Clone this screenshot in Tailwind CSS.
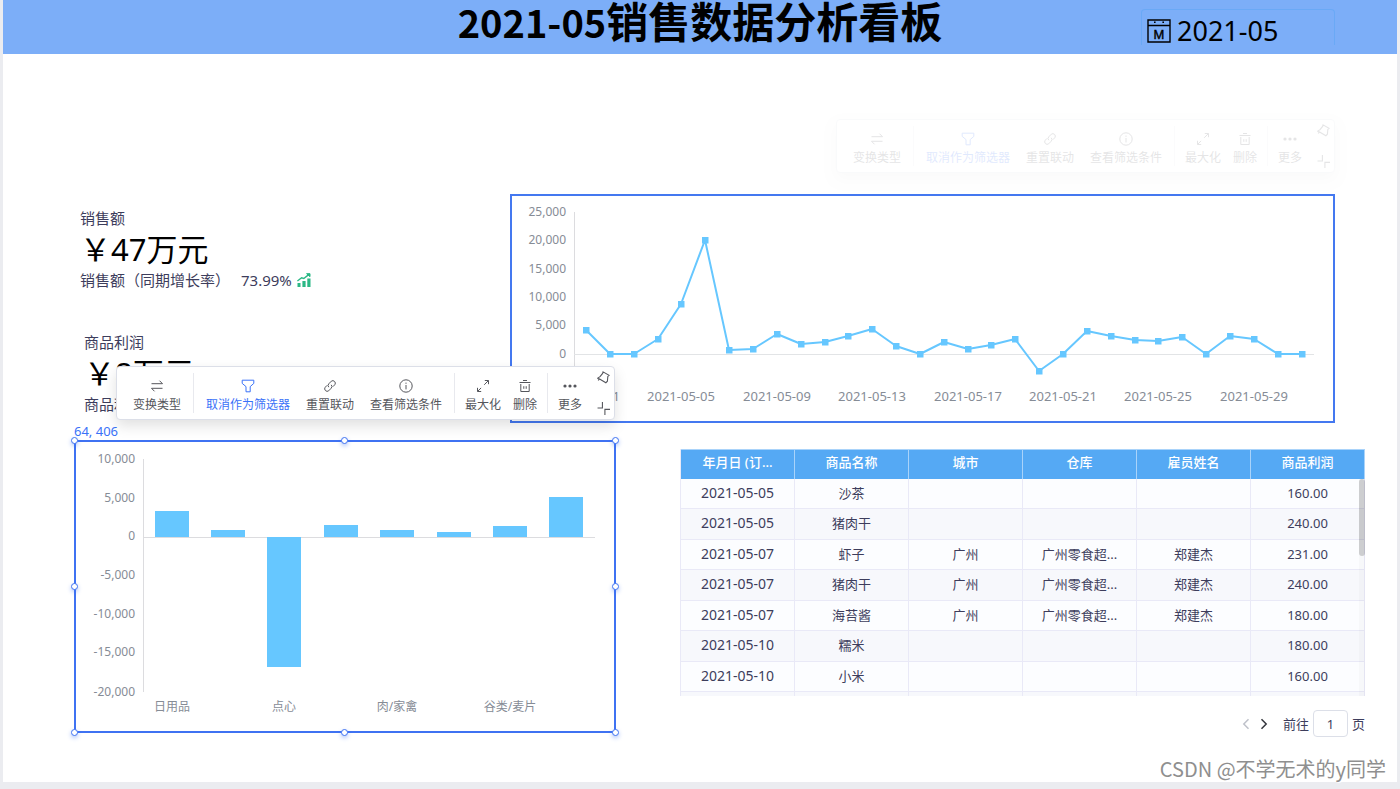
<!DOCTYPE html>
<html lang="zh-CN">

<head>
    <meta charset="UTF-8">
    <meta name="viewport" content="width=device-width, initial-scale=1.0">
    <title>销售数据分析看板</title>
    <script src="https://cdn.jsdelivr.net/npm/@tailwindcss/browser@4"></script>
</head>

<body class="min-h-screen flex flex-col bg-[#ebecf0] px-[3px] pb-[7px] font-['Noto_Sans','Noto_Sans_CJK_SC',sans-serif] text-[#3d3d5c]">

    <!-- Icon set -->
    <svg class="hidden" aria-hidden="true">
        <symbol id="i-swap" viewBox="0 0 14 14"><path d="M1.5 4.7h11l-3-3M12.5 9.3h-11l3 3" /></symbol>
        <symbol id="i-filter" viewBox="0 0 14 14"><path d="M1.2 1.2h11.6v3.2L9.2 7.6v5.2H5V7.6L1.2 4.4z" /></symbol>
        <symbol id="i-link" viewBox="0 0 14 14"><path d="M5.8 8.2a2.4 2.4 0 0 1 0-3.4l2.5-2.6a2.5 2.5 0 0 1 3.5 3.5L10 7.6M8.2 5.8a2.4 2.4 0 0 1 0 3.4l-2.5 2.6a2.5 2.5 0 0 1-3.5-3.5L4 6.4" /></symbol>
        <symbol id="i-info" viewBox="0 0 14 14"><circle cx="7" cy="7" r="6.2" /><path d="M7 6v4.4M7 3.6v1.2" /></symbol>
        <symbol id="i-max" viewBox="0 0 14 14"><path d="M8.8 1.5h3.7v3.7M12.3 1.7 8.2 5.8M5.2 12.5H1.5V8.8M1.7 12.3l3.4-3.4" /></symbol>
        <symbol id="i-trash" viewBox="0 0 14 14"><path d="M1.5 3.5h11M5 1.5h4M2.8 5v7.5h8.4V5M5.8 7.2v2.6M8.2 7.2v2.6" /></symbol>
        <symbol id="i-more" viewBox="0 0 14 14"><g fill="currentColor" stroke="none"><circle cx="2" cy="7" r="1.6" /><circle cx="7" cy="7" r="1.6" /><circle cx="12" cy="7" r="1.6" /></g></symbol>
        <symbol id="i-pin" viewBox="0 0 12 12"><path d="M5.6.8l5.6 3.2-1.2 1-.4 4.4-1.4 1.4L2.4 7.4.6 6.6l2.2-1.4 2.4-3zM2.4 7.4 1 8.6" /></symbol>
        <symbol id="i-fold" viewBox="0 0 12 12"><path d="M.5 5.5H5V0M12 6.8H7.3V12" /></symbol>
        <symbol id="i-growth" viewBox="0 0 14 14">
            <path fill="currentColor" stroke="none" d="M.5 10h3v4h-3zM5.4 8h3.2v6H5.4zM10.3 5.4h3.2V14h-3.2z" />
            <path stroke-width="1.4" d="M.4 8 4.6 4.8l2.2.7L12 1.4" /><path fill="currentColor" d="M9.6.7H13v3z" />
        </symbol>
    </svg>

    <!-- Widget toolbar, cloned above each selected chart -->
    <template id="toolbar">
        <div class="flex h-[54px] items-center rounded border border-[#dcdfe8] bg-white text-xs leading-4 text-[#55565c] shadow-[0_6px_14px_rgba(0,0,0,0.12)] whitespace-nowrap">
            <div class="pt-[6px] pl-4 pr-3">
                <button class="flex flex-col items-center gap-1"><svg class="size-[14px] fill-none stroke-current"><use href="#i-swap" /></svg>变换类型</button>
            </div>
            <div class="flex gap-4 border-l border-[#e8e9ee] px-3 pt-[6px]">
                <button class="flex flex-col items-center gap-1 text-[#3a72f8]"><svg class="size-[14px] fill-none stroke-current"><use href="#i-filter" /></svg>取消作为筛选器</button>
                <button class="flex flex-col items-center gap-1"><svg class="size-[14px] fill-none stroke-current"><use href="#i-link" /></svg>重置联动</button>
                <button class="flex flex-col items-center gap-1"><svg class="size-[14px] fill-none stroke-current"><use href="#i-info" /></svg>查看筛选条件</button>
            </div>
            <div class="flex gap-3 border-l border-[#e8e9ee] px-[10px] pt-[6px]">
                <button class="flex flex-col items-center gap-1"><svg class="size-[14px] fill-none stroke-current"><use href="#i-max" /></svg>最大化</button>
                <button class="flex flex-col items-center gap-1"><svg class="size-[14px] fill-none stroke-current"><use href="#i-trash" /></svg>删除</button>
            </div>
            <div class="border-l border-[#e8e9ee] px-[10px] pt-[6px]">
                <button class="flex flex-col items-center gap-1"><svg class="size-[14px] fill-none stroke-current"><use href="#i-more" /></svg>更多</button>
            </div>
            <div class="flex h-full flex-col justify-between py-1 pl-[5px] pr-1">
                <button aria-label="固定"><svg class="size-[13px] fill-none stroke-current"><use href="#i-pin" /></svg></button>
                <button aria-label="收起"><svg class="size-[13px] fill-none stroke-current"><use href="#i-fold" /></svg></button>
            </div>
        </div>
    </template>

    <!-- Header -->
    <header class="grid h-[54px] grid-cols-[1fr_auto_1fr] items-start bg-[#7caef8]">
        <h1 class="col-start-2 text-[42px] leading-[40px] font-bold text-black font-['Noto_Sans_CJK_SC',sans-serif]"><span class="text-[38px]">2021-05</span>销售数据分析看板</h1>
        <button class="mr-[62px] mt-[9px] flex h-[36px] w-[194px] items-center gap-[6px] justify-self-end rounded-t border border-b-0 border-[#6aa9f6] pt-[6px] pl-[5px] text-[27px] leading-9 text-black">
            <svg class="size-6 fill-none stroke-black" viewBox="0 0 24 24">
                <path stroke-width="1.4" d="M1 1h22v22H1zM1 6.5h22" />
                <path stroke-width="1.6" d="M7 3.2h1.6M15.4 3.2H17" />
                <text x="12" y="19.5" text-anchor="middle" font-size="13" fill="#000" stroke="#000" stroke-width="0.4" class="font-['Liberation_Sans',sans-serif]">M</text>
            </svg>
            2021-05
        </button>
    </header>

    <main class="relative grow bg-white pt-[140px] pb-10">
        <!-- Indicators and daily trend -->
        <div class="grid grid-cols-[430fr_825fr] pl-[77px] pr-[62px]">
            <div class="pt-3 text-[15px] leading-6">
                <section>
                    <h2>销售额</h2>
                    <p class="text-[31px] leading-[38px] text-black">&#xFFE5;47万元</p>
                    <p class="flex items-center">销售额&#xFF08;同期增长率&#xFF09;<span class="ml-[11px] mr-[5px]">73.99%</span>
                        <svg class="size-[14px] fill-none stroke-[#2bb885] text-[#2bb885]"><use href="#i-growth" /></svg>
                    </p>
                </section>
                <section class="mt-[38px] pl-1">
                    <h2>商品利润</h2>
                    <p class="text-[31px] leading-[38px] text-black">&#xFFE5;8万元</p>
                    <p>商品利润&#xFF08;同期增长率&#xFF09;</p>
                </section>
            </div>

            <section class="relative self-start border-2 border-[#4478f0] bg-white">
                <div data-toolbar class="absolute right-[-2px] bottom-full z-10 mb-[23px] opacity-15"></div>
                <svg class="block h-auto w-full" viewBox="0 0 821 225" role="img" aria-label="每日利润">
                    <defs>
                        <marker id="dot" markerUnits="userSpaceOnUse" markerWidth="7" markerHeight="7" refX="3.5" refY="3.5"><rect width="7" height="7" fill="#66c7ff" /></marker>
                    </defs>
                    <path d="M62.5 16V187" stroke="#dcdcdf" />
                    <path d="M62 158.5H802" stroke="#e2e4e6" />
                    <g fill="#868c96" font-size="12" text-anchor="end">
                        <text x="54" y="20">25,000</text>
                        <text x="54" y="48">20,000</text>
                        <text x="54" y="77">15,000</text>
                        <text x="54" y="105">10,000</text>
                        <text x="54" y="133">5,000</text>
                        <text x="54" y="162">0</text>
                    </g>
                    <g fill="#868c96" font-size="13" text-anchor="middle">
                        <text x="74" y="205">2021-05-01</text>
                        <text x="169" y="205">2021-05-05</text>
                        <text x="265" y="205">2021-05-09</text>
                        <text x="360" y="205">2021-05-13</text>
                        <text x="456" y="205">2021-05-17</text>
                        <text x="551" y="205">2021-05-21</text>
                        <text x="646" y="205">2021-05-25</text>
                        <text x="742" y="205">2021-05-29</text>
                    </g>
                    <polyline fill="none" stroke="#66c7ff" stroke-width="2" stroke-linejoin="round" marker-start="url(#dot)" marker-mid="url(#dot)" marker-end="url(#dot)"
                        points="74,134 98,158 122,158 146,143 169,108 193,44 217,154 241,153 265,138 289,148 313,146 336,140 360,133 384,150 408,158 432,146 456,153 479,149 503,143 527,175 551,158 575,135 599,140 623,144 646,145 670,141 694,158 718,140 742,143 766,158 790,158" />
                </svg>
            </section>
        </div>

        <!-- Category profit and order detail -->
        <div class="mt-[17px] grid grid-cols-[542fr_685fr] gap-x-16 pl-[71px] pr-8">
            <section class="relative self-start border-2 border-[#3f72f2] bg-white">
                <div class="absolute bottom-full left-[-2px] mb-[3px] text-[13px] leading-4 text-[#3a72f8]">64, 406</div>
                <div data-toolbar class="absolute right-[-1px] bottom-full z-10 mb-[22px]"></div>
                <svg class="block h-auto w-full" viewBox="0 0 538 289" role="img" aria-label="各类别利润">
                    <path d="M67.5 17V250" stroke="#dcdcdf" />
                    <path d="M68 95.5H519" stroke="#dcdcdf" />
                    <g fill="#66c7ff">
                        <rect x="79" y="69" width="34" height="26" />
                        <rect x="135" y="88" width="34" height="7" />
                        <rect x="191" y="95" width="34" height="130" />
                        <rect x="248" y="83" width="34" height="12" />
                        <rect x="304" y="88" width="34" height="7" />
                        <rect x="361" y="90" width="34" height="5" />
                        <rect x="417" y="84" width="34" height="11" />
                        <rect x="473" y="55" width="34" height="40" />
                    </g>
                    <g fill="#868c96" font-size="12" text-anchor="end">
                        <text x="59" y="21">10,000</text>
                        <text x="59" y="60">5,000</text>
                        <text x="59" y="98">0</text>
                        <text x="59" y="137">-5,000</text>
                        <text x="59" y="176">-10,000</text>
                        <text x="59" y="214">-15,000</text>
                        <text x="59" y="254">-20,000</text>
                    </g>
                    <g fill="#868c96" font-size="12" text-anchor="middle">
                        <text x="96" y="269">日用品</text>
                        <text x="208" y="269">点心</text>
                        <text x="321" y="269">肉/家禽</text>
                        <text x="434" y="269">谷类/麦片</text>
                    </g>
                </svg>
                <!-- Resize handles -->
                <div class="absolute -inset-[5px] grid grid-cols-3 content-between">
                    <i class="size-[7px] rounded-full border border-[#3f72f2] bg-white shadow-[0_2px_4px_rgba(63,114,242,0.4)]"></i>
                    <i class="size-[7px] justify-self-center rounded-full border border-[#3f72f2] bg-white shadow-[0_2px_4px_rgba(63,114,242,0.4)]"></i>
                    <i class="size-[7px] justify-self-end rounded-full border border-[#3f72f2] bg-white shadow-[0_2px_4px_rgba(63,114,242,0.4)]"></i>
                    <i class="size-[7px] rounded-full border border-[#3f72f2] bg-white shadow-[0_2px_4px_rgba(63,114,242,0.4)]"></i>
                    <i class="col-start-3 size-[7px] justify-self-end rounded-full border border-[#3f72f2] bg-white shadow-[0_2px_4px_rgba(63,114,242,0.4)]"></i>
                    <i class="size-[7px] rounded-full border border-[#3f72f2] bg-white shadow-[0_2px_4px_rgba(63,114,242,0.4)]"></i>
                    <i class="size-[7px] justify-self-center rounded-full border border-[#3f72f2] bg-white shadow-[0_2px_4px_rgba(63,114,242,0.4)]"></i>
                    <i class="size-[7px] justify-self-end rounded-full border border-[#3f72f2] bg-white shadow-[0_2px_4px_rgba(63,114,242,0.4)]"></i>
                </div>
            </section>

            <section class="mt-[9px] min-w-0">
                <div class="relative h-[247px] overflow-hidden">
                    <table class="w-full table-fixed border-separate border-spacing-0 border-l border-[#e9e9f7] text-center text-[13px] leading-4">
                        <thead class="bg-[#55a9f4] text-white">
                            <tr class="h-[30px] *:border-r *:border-t *:border-[#a9d3fa] *:p-0 *:pb-[5px] *:font-medium">
                                <th>年月日 (订...</th>
                                <th>商品名称</th>
                                <th>城市</th>
                                <th>仓库</th>
                                <th>雇员姓名</th>
                                <th>商品利润</th>
                            </tr>
                        </thead>
                        <tbody class="*:h-[30px] *:bg-[#fcfdff] *:even:h-[31px] *:even:bg-[#f7f8fc] **:[td]:border-r **:[td]:border-b **:[td]:border-[#e9e9f7] **:[td]:p-0 **:[td]:pb-[2px]">
                            <tr><td class="text-sm leading-4">2021-05-05</td><td>沙茶</td><td></td><td></td><td></td><td>160.00</td></tr>
                            <tr><td class="text-sm leading-4">2021-05-05</td><td>猪肉干</td><td></td><td></td><td></td><td>240.00</td></tr>
                            <tr><td class="text-sm leading-4">2021-05-07</td><td>虾子</td><td>广州</td><td>广州零食超...</td><td>郑建杰</td><td>231.00</td></tr>
                            <tr><td class="text-sm leading-4">2021-05-07</td><td>猪肉干</td><td>广州</td><td>广州零食超...</td><td>郑建杰</td><td>240.00</td></tr>
                            <tr><td class="text-sm leading-4">2021-05-07</td><td>海苔酱</td><td>广州</td><td>广州零食超...</td><td>郑建杰</td><td>180.00</td></tr>
                            <tr><td class="text-sm leading-4">2021-05-10</td><td>糯米</td><td></td><td></td><td></td><td>180.00</td></tr>
                            <tr><td class="text-sm leading-4">2021-05-10</td><td>小米</td><td></td><td></td><td></td><td>160.00</td></tr>
                            <tr><td></td><td></td><td></td><td></td><td></td><td></td></tr>
                        </tbody>
                    </table>
                    <!-- Scrollbar -->
                    <div class="absolute top-[30px] right-0 bottom-0 w-[6px] bg-black/[2%]">
                        <div class="h-[77px] rounded-full bg-black/17"></div>
                    </div>
                </div>

                <!-- Pager -->
                <div class="mt-[14px] flex h-[27px] items-center justify-end text-[13px] leading-4">
                    <button aria-label="上一页" class="mr-[10px]"><svg class="h-3 w-2 fill-none stroke-[#bfc2ca] stroke-[1.5]" viewBox="0 0 8 12"><path d="M6.5 1.2 1.8 6l4.7 4.8" /></svg></button>
                    <button aria-label="下一页" class="mr-[15px]"><svg class="h-3 w-2 fill-none stroke-[#33353c] stroke-[1.5]" viewBox="0 0 8 12"><path d="M1.5 1.2 6.2 6l-4.7 4.8" /></svg></button>
                    <label for="page">前往</label>
                    <input id="page" type="text" value="1" class="mx-1 h-[27px] w-[35px] rounded border border-[#dcdfe8] text-center">
                    <span>页</span>
                </div>
            </section>
        </div>

        <!-- Watermark -->
        <p class="absolute right-[11px] bottom-0 text-[20px] leading-[26px] text-[#8f8f8f] [text-shadow:1px_1px_1px_#ffffff] font-['Noto_Sans_CJK_SC',sans-serif]">CSDN @不学无术的y同学</p>
    </main>

    <script>
        const toolbar = document.getElementById('toolbar');
        document.querySelectorAll('[data-toolbar]').forEach(slot => slot.append(toolbar.content.cloneNode(true)));
    </script>
</body>

</html>
